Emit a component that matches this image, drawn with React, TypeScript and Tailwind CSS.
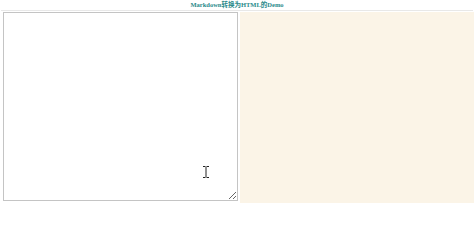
import React from "react";

export default function App() {
  return (
    <div className="w-[474px] h-[203px] bg-white overflow-hidden relative" style={{ fontFamily: '"Liberation Serif", "Noto Sans CJK SC", serif' }}>
      <div className="h-[10px] flex items-center justify-center text-[6.5px] font-bold text-[#2a8a8a] leading-none pt-[1px]">
        Markdown转换为HTML的Demo
      </div>
      <div className="h-px bg-[#e8e8e8] mx-[1px]" />
      <div className="flex gap-[2px] pl-[3px] pt-[1px] h-[192px]">
        <textarea
          className="w-[235px] h-[189px] border border-[#c4c4c4] bg-white resize-y outline-none text-[7px] p-[1px]"
          defaultValue=""
          autoFocus
        />
        <div className="flex-1 bg-[#fbf4e7]" />
      </div>
      <svg className="absolute left-[202px] top-[166px]" width="8" height="12" viewBox="0 0 8 12">
        <path d="M1 0.5h2.5M4.5 0.5H7M4 1v10M1 11.5h2.5M4.5 11.5H7" stroke="#222" strokeWidth="1" fill="none" />
      </svg>
    </div>
  );
}
